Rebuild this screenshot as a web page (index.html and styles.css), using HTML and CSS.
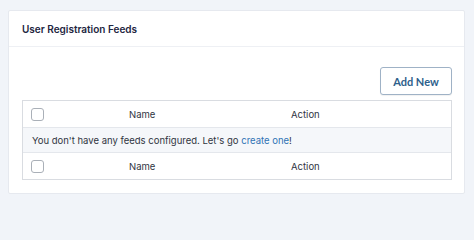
FILE: index.html
```html
<!DOCTYPE html>
<html>
<head>
<meta charset="utf-8">
<link rel="stylesheet" href="styles.css">
</head>
<body>
<div class="card">
  <div class="card-header">User Registration Feeds</div>
  <div class="card-body">
    <div class="actions"><button class="btn">Add New</button></div>
    <div class="table">
      <div class="row head">
        <div class="cell cb"><span class="check"></span></div>
        <div class="cell">Name</div>
        <div class="cell">Action</div>
      </div>
      <div class="row empty">
        <div class="cell full">You don't have any feeds configured. Let's go <a href="#">create one</a>!</div>
      </div>
      <div class="row foot">
        <div class="cell cb"><span class="check"></span></div>
        <div class="cell">Name</div>
        <div class="cell">Action</div>
      </div>
    </div>
  </div>
</div>
</body>
</html>
```

FILE: styles.css
```css
* { box-sizing: border-box; }
html, body { margin: 0; padding: 0; }
html { background: #f1f4f9; }
body {
  font-family: Inter, "Noto Sans", sans-serif;
  width: 474px;
  height: 204px;
  padding: 10px 10px 0 8px;
  overflow: hidden;
}
.card {
  width: 457px;
  height: 184px;
  background: #fff;
  border: 1px solid #e6e9ef;
  border-radius: 2px;
}
.card-header {
  height: 36px;
  padding-left: 13px;
  display: flex;
  align-items: center;
  font-size: 10px;
  font-weight: 600;
  color: #23263f;
  border-bottom: 1px solid #eef0f4;
}
.card-body {
  padding: 20px 12px 0 13px;
}
.actions {
  display: flex;
  justify-content: flex-end;
  margin-bottom: 5px;
}
.btn {
  width: 72px;
  height: 28px;
  border: 1px solid #9fb2c6;
  border-radius: 3px;
  background: #fff;
  color: #2e5f8c;
  font-family: Lato, Inter, sans-serif;
  font-weight: 700;
  font-size: 11px;
  padding: 0;
  box-shadow: 0 1px 1px rgba(0,0,0,0.06);
}
.table {
  border: 1px solid #d9dce1;
  width: 430px;
}
.row {
  display: grid;
  grid-template-columns: 97px 162px 1fr;
  height: 26px;
  align-items: center;
  font-size: 9.5px;
  color: #30353f;
}
.row.empty {
  grid-template-columns: 1fr;
  background: #f5f7fa;
  border-top: 1px solid #e4e7ec;
  border-bottom: 1px solid #e4e7ec;
}
.cell { padding-left: 9px; }
.cb { padding-left: 8px; display: flex; align-items: center; }
.check {
  width: 13px;
  height: 13px;
  border: 1px solid #aab0b8;
  border-radius: 3px;
  background: #fff;
}
a { color: #2f73b5; text-decoration: none; }
```
